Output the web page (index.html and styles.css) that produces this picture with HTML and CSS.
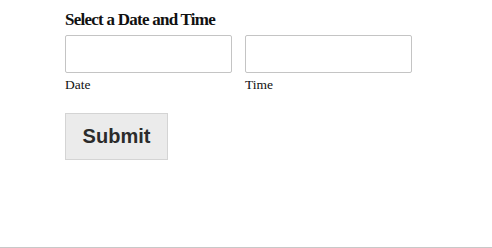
FILE: index.html
```html
<!DOCTYPE html>
<html>
<head>
<meta charset="utf-8">
<link rel="stylesheet" href="styles.css">
</head>
<body>
<div class="page">
  <form class="form">
    <h2 class="title">Select a Date and Time</h2>
    <div class="fields">
      <div class="field">
        <input class="input" type="text">
        <label class="label">Date</label>
      </div>
      <div class="field">
        <input class="input" type="text">
        <label class="label">Time</label>
      </div>
    </div>
    <button class="submit" type="button">Submit</button>
  </form>
</div>
</body>
</html>
```

FILE: styles.css
```css
html, body {
  margin: 0;
  padding: 0;
  background: #fff;
}
.page {
  width: 492px;
  height: 247px;
  border-bottom: 1px solid #c8c8c8;
  box-sizing: content-box;
}
.form {
  padding: 10px 0 0 65px;
  font-family: "Liberation Serif", serif;
  color: #111;
}
.title {
  margin: 0;
  font-size: 17px;
  letter-spacing: -0.75px;
  font-weight: bold;
  line-height: 20px;
  height: 25px;
}
.fields {
  display: flex;
  gap: 13px;
}
.field {
  display: flex;
  flex-direction: column;
}
.input {
  width: 167px;
  height: 38px;
  box-sizing: border-box;
  border: 1px solid #c4c4c4;
  border-radius: 2px;
  margin: 0;
  padding: 0;
  background: #fff;
}
.label {
  font-size: 13.5px;
  line-height: 16px;
  margin-top: 4px;
}
.submit {
  margin-top: 20px;
  width: 103px;
  height: 47px;
  box-sizing: border-box;
  background: #ebebeb;
  border: 1px solid #d4d4d4;
  border-radius: 0;
  font-family: "Liberation Sans", Arial, sans-serif;
  font-size: 20px;
  font-weight: bold;
  color: #2b2b2b;
  padding: 0;
}
```
